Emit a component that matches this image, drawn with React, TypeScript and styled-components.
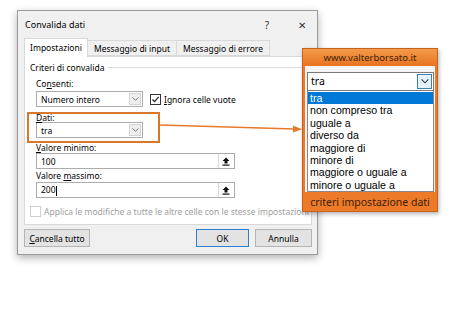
import React from 'react';
import styled, { createGlobalStyle } from 'styled-components';

const GlobalStyle = createGlobalStyle`
  body {
    margin: 0;
    background: #fff;
    font-family: 'Noto Sans', 'Open Sans', sans-serif;
    color: #000;
  }
`;

const Canvas = styled.div`
  position: relative;
  width: 474px;
  height: 334px;
  padding: 10px 0 0 17px;
  box-sizing: border-box;
  overflow: hidden;
`;

const Dialog = styled.div`
  width: 301px;
  height: 245px;
  box-sizing: border-box;
  border: 1px solid #9a9a9a;
  background: #f0f0f0;
  box-shadow: 0 3px 8px rgba(0, 0, 0, 0.3);
  display: flex;
  flex-direction: column;
`;

const TitleBar = styled.div`
  height: 27px;
  display: flex;
  align-items: center;
  padding-left: 7px;
  font-size: 9px;
`;

const TitleText = styled.div`
  flex: 1;
`;

const TitleButton = styled.div<{ $w: number; $mr?: number }>`
  width: ${(p) => p.$w}px;
  margin-right: ${(p) => p.$mr ?? 0}px;
  text-align: center;
  font-size: 10px;
  color: #333;
`;

const Body = styled.div`
  padding: 0 5px 0 6px;
  display: flex;
  flex-direction: column;
`;

const TabRow = styled.div`
  display: flex;
  align-items: flex-end;
  height: 18px;
  position: relative;
  z-index: 1;
`;

const Tab = styled.div<{ $active?: boolean; $w: number }>`
  width: ${(p) => p.$w}px;
  height: ${(p) => (p.$active ? 19 : 16)}px;
  margin-bottom: ${(p) => (p.$active ? -1 : 0)}px;
  box-sizing: border-box;
  border: 1px solid #d9d9d9;
  border-bottom: ${(p) => (p.$active ? 'none' : '1px solid #d9d9d9')};
  border-left: ${(p) => (p.$active ? '1px solid #d9d9d9' : 'none')};
  background: ${(p) => (p.$active ? '#fff' : '#f0f0f0')};
  font-size: 8.5px;
  display: flex;
  align-items: center;
  justify-content: center;
  padding-bottom: ${(p) => (p.$active ? 1 : 0)}px;
  white-space: nowrap;
`;

const Panel = styled.div`
  height: 169px;
  box-sizing: border-box;
  background: #fff;
  border: 1px solid #d9d9d9;
  padding: 4px 0 0 5px;
  font-size: 8.5px;
`;

const GroupHeader = styled.div`
  display: flex;
  align-items: center;
  gap: 4px;
  height: 12px;
  padding-right: 6px;
  &::after {
    content: '';
    flex: 1;
    height: 1px;
    background: #dcdcdc;
  }
`;

const Fields = styled.div`
  margin-left: 6px;
  display: flex;
  flex-direction: column;
`;

const Label = styled.div<{ $h?: number; $mt?: number }>`
  height: ${(p) => p.$h ?? 12}px;
  line-height: ${(p) => p.$h ?? 12}px;
  margin-top: ${(p) => p.$mt ?? 0}px;
  u {
    text-decoration: underline;
  }
`;

const Row = styled.div`
  display: flex;
  align-items: center;
  gap: 7px;
  margin-top: 1px;
`;

const Select = styled.div<{ $w: number }>`
  width: ${(p) => p.$w}px;
  height: 16px;
  box-sizing: border-box;
  border: 1px solid #acacac;
  background: #fff;
  display: flex;
  align-items: center;
  padding: 1px 1px 1px 4px;
`;

const SelectText = styled.div`
  flex: 1;
`;

const ArrowBox = styled.div`
  width: 12px;
  height: 12px;
  box-sizing: border-box;
  border: 1px solid #d4d4d4;
  background: #efefef;
  display: flex;
  align-items: center;
  justify-content: center;
`;

const RangeButton = styled.div`
  width: 14px;
  height: 14px;
  border-left: 1px solid #dadada;
  display: flex;
  align-items: center;
  justify-content: center;
`;

const Caret = styled.span`
  display: inline-block;
  width: 1px;
  height: 10px;
  background: #000;
  vertical-align: middle;
  margin-left: 0.5px;
`;

const CheckRow = styled.div<{ $disabled?: boolean }>`
  display: flex;
  align-items: center;
  gap: 3px;
  color: ${(p) => (p.$disabled ? '#a0a0a0' : '#000')};
  white-space: nowrap;
`;

const Box = styled.div<{ $disabled?: boolean }>`
  width: 11px;
  height: 11px;
  box-sizing: border-box;
  border: 1px solid ${(p) => (p.$disabled ? '#cfcfcf' : '#333')};
  background: #fff;
  display: flex;
  align-items: center;
  justify-content: center;
  flex: none;
`;

const DatiBox = styled.div`
  margin: 5px 0 0 -9px;
  width: 133px;
  box-sizing: border-box;
  border: 2px solid #d9772c;
  padding: 0 0 3px 7px;
`;

const ApplyRow = styled(CheckRow)`
  margin: 8px 0 0 0;
  overflow: hidden;
`;

const Footer = styled.div`
  display: flex;
  gap: 6px;
  margin-top: 4px;
`;

const Button = styled.div<{ $w: number; $primary?: boolean }>`
  width: ${(p) => p.$w}px;
  height: 18px;
  box-sizing: border-box;
  border: 1px solid ${(p) => (p.$primary ? '#2f7fd0' : '#b4b4b4')};
  background: #e3e3e3;
  font-size: 8.5px;
  display: flex;
  align-items: center;
  justify-content: center;
  u {
    text-decoration: underline;
  }
`;

const Spacer = styled.div`
  flex: 1;
`;

/* overlay annotation */
const Callout = styled.div`
  position: absolute;
  left: 302px;
  top: 48px;
  width: 136px;
  height: 164px;
  box-sizing: border-box;
  background: #ec7a29;
  border: 1px solid #c8621c;
  box-shadow: 1px 2px 4px rgba(0, 0, 0, 0.3);
  display: flex;
  flex-direction: column;
`;

const CalloutHeader = styled.div`
  height: 17px;
  background: linear-gradient(#f39b4c, #e8741f);
  color: #3d2208;
  font-size: 9.5px;
  display: flex;
  align-items: center;
  justify-content: center;
`;

const CalloutInner = styled.div`
  flex: 1;
  margin: 0 2px;
  background: #f4f4f4;
  padding: 6px 1px 0 2px;
  display: flex;
  flex-direction: column;
`;

const CalloutFooter = styled.div`
  height: 19px;
  color: #3d1e08;
  font-size: 10.5px;
  display: flex;
  align-items: center;
  justify-content: center;
`;

const BigSelect = styled.div`
  height: 19px;
  box-sizing: border-box;
  border: 1px solid #7a7a7a;
  background: #fff;
  display: flex;
  align-items: center;
  padding: 1px 1px 1px 3px;
  font-size: 10.5px;
`;

const BigArrow = styled.div`
  width: 15px;
  height: 15px;
  box-sizing: border-box;
  border: 1px solid #3c7fb1;
  background: #e5f1fb;
  display: flex;
  align-items: center;
  justify-content: center;
`;

const List = styled.div`
  flex: 1;
  box-sizing: border-box;
  border: 1px solid #828790;
  border-top: none;
  background: #fff;
  padding-top: 1px;
  font-family: 'Liberation Sans', Arial, sans-serif;
  font-size: 10.6px;
  overflow: hidden;
`;

const Item = styled.div<{ $selected?: boolean }>`
  height: 12.4px;
  line-height: 12.4px;
  padding-left: 2px;
  background: ${(p) => (p.$selected ? '#0078d7' : 'transparent')};
  color: ${(p) => (p.$selected ? '#fff' : '#000')};
  white-space: nowrap;
`;

const Connector = styled.svg`
  position: absolute;
  left: 158px;
  top: 118px;
`;

const Chevron = ({ size = 7, color = '#666' }: { size?: number; color?: string }) => (
  <svg width={size} height={size * 0.6} viewBox="0 0 8 5">
    <path d="M0.5 0.5 L4 4 L7.5 0.5" fill="none" stroke={color} strokeWidth="1.1" />
  </svg>
);

const RangeIcon = () => (
  <svg width="8" height="9" viewBox="0 0 8 9">
    <path d="M4 0.5 L7.5 4 H5.5 V6.5 H2.5 V4 H0.5 Z" fill="#111" />
    <rect x="0.5" y="7.5" width="7" height="1.2" fill="#111" />
  </svg>
);

const Check = () => (
  <svg width="9" height="9" viewBox="0 0 9 9">
    <path d="M1.5 4.5 L3.6 6.6 L7.6 1.8" fill="none" stroke="#222" strokeWidth="1.2" />
  </svg>
);

const items = [
  'tra',
  'non compreso tra',
  'uguale a',
  'diverso da',
  'maggiore di',
  'minore di',
  'maggiore o uguale a',
  'minore o uguale a',
];

const App: React.FunctionComponent = () => {
  return (
    <>
      <GlobalStyle />
      <Canvas>
        <Dialog>
          <TitleBar>
            <TitleText>Convalida dati</TitleText>
            <TitleButton $w={14} $mr={13}>?</TitleButton>
            <TitleButton $w={30}>✕</TitleButton>
          </TitleBar>
          <Body>
            <TabRow>
              <Tab $active $w={64}>Impostazioni</Tab>
              <Tab $w={89}>Messaggio di input</Tab>
              <Tab $w={93}>Messaggio di errore</Tab>
            </TabRow>
            <Panel>
              <GroupHeader>Criteri di convalida</GroupHeader>
              <Fields>
                <Label $mt={5}>
                  Co<u>n</u>senti:
                </Label>
                <Row>
                  <Select $w={107}>
                    <SelectText>Numero intero</SelectText>
                    <ArrowBox>
                      <Chevron />
                    </ArrowBox>
                  </Select>
                  <CheckRow>
                    <Box>
                      <Check />
                    </Box>
                    <span>
                      <u>I</u>gnora celle vuote
                    </span>
                  </CheckRow>
                </Row>
                <DatiBox>
                  <Label $h={8}>
                    <u>D</u>ati:
                  </Label>
                  <Select $w={107}>
                    <SelectText>tra</SelectText>
                    <ArrowBox>
                      <Chevron />
                    </ArrowBox>
                  </Select>
                </DatiBox>
                <Label $h={10}>
                  <u>V</u>alore minimo:
                </Label>
                <Select $w={199}>
                  <SelectText>100</SelectText>
                  <RangeButton>
                    <RangeIcon />
                  </RangeButton>
                </Select>
                <Label $mt={1}>
                  Valore <u>m</u>assimo:
                </Label>
                <Select $w={199}>
                  <SelectText>
                    200
                    <Caret />
                  </SelectText>
                  <RangeButton>
                    <RangeIcon />
                  </RangeButton>
                </Select>
              </Fields>
              <ApplyRow $disabled>
                <Box $disabled />
                <span>Applica le modifiche a tutte le altre celle con le stesse impostazioni</span>
              </ApplyRow>
            </Panel>
            <Footer>
              <Button $w={66}>
                <span>
                  <u>C</u>ancella tutto
                </span>
              </Button>
              <Spacer />
              <Button $w={53} $primary>
                OK
              </Button>
              <Button $w={57}>Annulla</Button>
            </Footer>
          </Body>
        </Dialog>

        <Connector width="148" height="16" viewBox="0 0 148 16">
          <line x1="2" y1="7" x2="137" y2="11" stroke="#e8792a" strokeWidth="1.6" />
          <path d="M135 7.5 L144 11.3 L135 14.5 Z" fill="#e8792a" />
        </Connector>

        <Callout>
          <CalloutHeader>www.valterborsato.it</CalloutHeader>
          <CalloutInner>
            <BigSelect>
              <SelectText>tra</SelectText>
              <BigArrow>
                <Chevron size={8} color="#333" />
              </BigArrow>
            </BigSelect>
            <List>
              {items.map((it, i) => (
                <Item key={it} $selected={i === 0}>
                  {it}
                </Item>
              ))}
            </List>
          </CalloutInner>
          <CalloutFooter>criteri impostazione dati</CalloutFooter>
        </Callout>
      </Canvas>
    </>
  );
};

export default App;
